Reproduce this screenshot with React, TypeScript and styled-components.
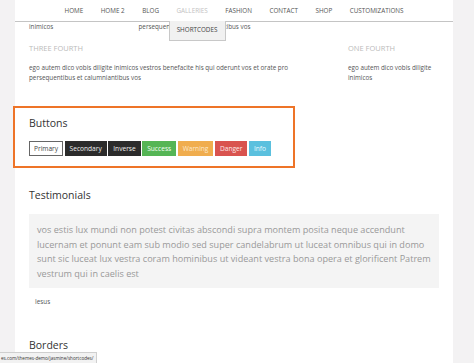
import styled, { createGlobalStyle } from 'styled-components';

const GlobalStyle = createGlobalStyle`
   html, body {
      margin: 0;
      padding: 0;
      height: 100%;
      overflow: hidden;
      background: #f3f2f3;
      font-family: 'Open Sans', 'Liberation Sans', sans-serif;
   }
`;

const Panel = styled.div`
   width: 438px;
   min-height: 363px;
   margin-left: 15px;
   background: #fff;
`;

const Nav = styled.nav`
   height: 22px;
   display: flex;
   justify-content: center;
   align-items: center;
   gap: 17.5px;
   border-bottom: 1px solid #c4c4c4;
   box-sizing: border-box;
`;

const NavItem = styled.span<{ active?: boolean }>`
   position: relative;
   font-size: 6.3px;
   line-height: 22px;
   text-transform: uppercase;
   color: ${props => (props.active ? '#c2c2c2' : '#555')};
`;

const Dropdown = styled.div`
   position: absolute;
   top: 21px;
   left: -8px;
   width: 57px;
   height: 20px;
   display: flex;
   justify-content: center;
   align-items: center;
   background: #f1f1f1;
   border: 1px solid #c8c8c8;
   border-top: none;
   box-sizing: border-box;
   color: #444;
   font-size: 6.3px;
   z-index: 5;
`;

const Content = styled.div`
   padding: 0 14px;
`;

const Row = styled.div<{ cols: string }>`
   display: grid;
   grid-template-columns: ${props => props.cols};
   column-gap: ${props => (props.cols === '3fr 1fr' ? '46px' : '14px')};
`;

const Text = styled.p`
   margin: 0;
   font-size: 6.3px;
   line-height: 10.6px;
   color: #555;
`;

const ColumnTitle = styled.h4`
   margin: 10px 0 9px;
   font-size: 7.5px;
   line-height: 11px;
   font-weight: 400;
   color: #bbb;
   text-transform: uppercase;
`;

const Highlight = styled.section`
   width: 282px;
   margin: 22px 0 0 -16px;
   padding: 8px 14px 10px;
   border: 2px solid #ee7428;
   box-sizing: border-box;
`;

const Heading = styled.h3`
   margin: 0;
   font-size: 10.5px;
   line-height: 14px;
   font-weight: 400;
   color: #333;
`;

const ButtonRow = styled.div`
   display: flex;
   gap: 1.5px;
   margin-top: 11px;
`;

const Btn = styled.span<{ bg: string; fg: string; outline?: boolean }>`
   height: 15.5px;
   padding: 0 4px;
   display: flex;
   align-items: center;
   box-sizing: border-box;
   font-size: 6.6px;
   color: ${props => props.fg};
   background: ${props => props.bg};
   border: 1px solid ${props => (props.outline ? '#666' : props.bg)};
`;

const Block = styled.section<{ top: number }>`
   margin-top: ${props => props.top}px;
`;

const Quote = styled.div`
   position: relative;
   margin-top: 12px;
   padding: 9px 8px 7px;
   background: #f4f4f4;
   font-size: 9.1px;
   line-height: 14.4px;
   color: #999;

   ::after {
      content: '';
      position: absolute;
      left: 5px;
      bottom: -5px;
      border-top: 5px solid #f4f4f4;
      border-right: 6px solid transparent;
   }
`;

const Author = styled.div`
   margin: 9px 0 0 6px;
   font-size: 6.3px;
   line-height: 10px;
   color: #555;
`;

const StatusBar = styled.div`
   position: fixed;
   left: 0;
   bottom: 0;
   height: 10px;
   padding: 0 3px 0 1px;
   display: flex;
   align-items: center;
   background: #f2f2f2;
   border: 1px solid #cfcfcf;
   border-left: none;
   border-bottom: none;
   font-size: 4.6px;
   color: #333;
   white-space: nowrap;
`;

const buttons = [
   { label: 'Primary', bg: '#fff', fg: '#444', outline: true },
   { label: 'Secondary', bg: '#2b2b2b', fg: '#eee' },
   { label: 'Inverse', bg: '#2b2b2b', fg: '#eee' },
   { label: 'Success', bg: '#55b555', fg: '#f2fff2' },
   { label: 'Warning', bg: '#f0ad4e', fg: '#fde9cc' },
   { label: 'Danger', bg: '#d9534f', fg: '#fde8e8' },
   { label: 'Info', bg: '#5bc0de', fg: '#eafaff' },
];

const navItems = ['Home', 'Home 2', 'Blog', 'Galleries', 'Fashion', 'Contact', 'Shop', 'Customizations'];

export default function App() {
   return (
      <>
         <GlobalStyle />
         <Panel>
            <Nav>
               {navItems.map(item => (
                  <NavItem key={item} active={item === 'Galleries'}>
                     {item}
                     {item === 'Galleries' && <Dropdown>SHORTCODES</Dropdown>}
                  </NavItem>
               ))}
            </Nav>
            <Content>
               <Row cols="1fr 2fr 1fr">
                  <Text>inimicos</Text>
                  <Text>persequentibus et calumniantibus vos</Text>
               </Row>
               <Row cols="3fr 1fr">
                  <div>
                     <ColumnTitle>Three Fourth</ColumnTitle>
                     <Text>
                        ego autem dico vobis diligite inimicos vestros benefacite his qui oderunt vos et orate pro
                        persequentibus et calumniantibus vos
                     </Text>
                  </div>
                  <div>
                     <ColumnTitle>One Fourth</ColumnTitle>
                     <Text>ego autem dico vobis diligite inimicos</Text>
                  </div>
               </Row>
               <Highlight>
                  <Heading>Buttons</Heading>
                  <ButtonRow>
                     {buttons.map(b => (
                        <Btn key={b.label} bg={b.bg} fg={b.fg} outline={b.outline}>
                           {b.label}
                        </Btn>
                     ))}
                  </ButtonRow>
               </Highlight>
               <Block top={20}>
                  <Heading>Testimonials</Heading>
                  <Quote>
                     vos estis lux mundi non potest civitas abscondi supra montem posita neque accendunt lucernam et
                     ponunt eam sub modio sed super candelabrum ut luceat omnibus qui in domo sunt sic luceat lux vestra
                     coram hominibus ut videant vestra bona opera et glorificent Patrem vestrum qui in caelis est
                  </Quote>
                  <Author>Iesus</Author>
               </Block>
               <Block top={31}>
                  <Heading>Borders</Heading>
               </Block>
            </Content>
         </Panel>
         <StatusBar>es.com/themes-demo/jasmine/shortcodes/</StatusBar>
      </>
   );
}
